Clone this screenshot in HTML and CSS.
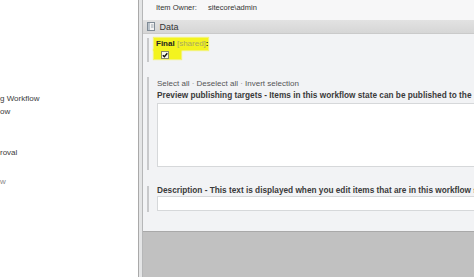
FILE: index.html
```html
<!DOCTYPE html>
<html>
<head>
<meta charset="utf-8">
<link rel="stylesheet" href="styles.css">
</head>
<body>
<div class="app">
  <div class="tree">
    <div class="node">g Workflow</div>
    <div class="node">ow</div>
    <div class="node gap1">roval</div>
    <div class="node gap2 dim">w</div>
  </div>
  <div class="splitter"></div>
  <div class="main">
    <div class="owner">
      <span class="owner-label">Item Owner:</span>
      <span class="owner-value">sitecore\admin</span>
    </div>
    <div class="section-head">
      <svg class="sec-icon" width="8" height="9" viewBox="0 0 8 9">
        <rect x="0.5" y="0.5" width="7" height="8" fill="#f4f4f4" stroke="#7f8b96"/>
        <rect x="1" y="1" width="2" height="7" fill="#b9c2ca"/>
        <line x1="4" y1="3" x2="6.5" y2="3" stroke="#9aa4ad"/>
        <line x1="4" y1="5" x2="6.5" y2="5" stroke="#9aa4ad"/>
      </svg>
      <span class="sec-title">Data</span>
    </div>
    <div class="fields">
      <div class="field field-final">
        <div class="hl hl-label"><b>Final</b> <span class="shared">[shared]</span><b>:</b></div>
        <div class="hl hl-check">
          <span class="checkbox">
            <svg width="6" height="6" viewBox="0 0 6 6"><path d="M0.8 3.2 L2.4 4.8 L5.3 1.2" fill="none" stroke="#111" stroke-width="1.4"/></svg>
          </span>
        </div>
      </div>
      <div class="field field-targets">
        <div class="links">Select all <span class="dot">·</span> Deselect all <span class="dot">·</span> Invert selection</div>
        <div class="ftitle">Preview publishing targets - Items in this workflow state can be published to the</div>
        <div class="box tall"></div>
      </div>
      <div class="field field-desc">
        <div class="ftitle desc-title">Description - This text is displayed when you edit items that are in this workflow s</div>
        <div class="box short"></div>
      </div>
    </div>
    <div class="bottom"></div>
  </div>
</div>
</body>
</html>
```
FILE: styles.css
```css
html, body {
  margin: 0;
  padding: 0;
}
body {
  width: 474px;
  height: 277px;
  overflow: hidden;
  font-family: "Liberation Sans", Arial, sans-serif;
  color: #3a3a3a;
  background: #ffffff;
}
.app {
  display: flex;
  height: 277px;
  width: 474px;
  overflow: hidden;
}
.tree {
  width: 138px;
  flex: none;
  background: #ffffff;
  padding-top: 91.5px;
  box-sizing: border-box;
  overflow: hidden;
  font-size: 8px;
  line-height: 13px;
}
.node {
  white-space: nowrap;
  color: #3c3c3c;
}
.node.gap1 { margin-top: 28px; }
.node.gap2 { margin-top: 16px; }
.node.dim { color: #8a8a8a; }

.splitter {
  width: 3px;
  flex: none;
  background: #e4e5e6;
  border-left: 1px solid #a9a9a9;
  border-right: 1px solid #b6b7b8;
}
.main {
  flex: 1;
  min-width: 0;
  display: flex;
  flex-direction: column;
  background: #f2f3f5;
  overflow: hidden;
}
.owner {
  height: 20px;
  box-sizing: border-box;
  padding: 3px 0 0 13px;
  font-size: 7.5px;
  line-height: 9px;
  background: #f7f7f8;
  white-space: nowrap;
  color: #333;
}
.owner-label {
  display: inline-block;
  width: 50px;
}
.section-head {
  height: 13px;
  display: flex;
  align-items: center;
  padding-left: 3.5px;
  background: linear-gradient(#e2e2e2, #d6d6d6);
  border-bottom: 1px solid #cacaca;
  flex: none;
}
.sec-icon {
  display: block;
  margin-right: 5px;
}
.sec-title {
  font-size: 9px;
  color: #333;
  line-height: 10px;
}
.fields {
  flex: 1;
  padding-top: 4px;
  padding-left: 4px;
}
.field {
  border-left: 2px solid #c8c9cb;
  box-sizing: border-box;
}
.field-final {
  padding: 0 0 3px 5px;
  display: flex;
  flex-direction: column;
  align-items: flex-start;
}
.hl {
  background: #f3f31f;
  box-shadow: 0 0 1px 1px rgba(243, 243, 31, 0.6);
}
.hl-label {
  font-size: 8px;
  line-height: 9.5px;
  padding: 1px 2px;
  width: 50px;
  white-space: nowrap;
  color: #222;
}
.shared {
  color: #a8a862;
}
.hl-check {
  padding: 1px 12px 1px 7px;
  height: 7px;
}
.checkbox {
  display: flex;
  align-items: center;
  justify-content: center;
  width: 6px;
  height: 6px;
  border: 1px solid #8a8a6a;
  background: #fbfbe8;
}
.checkbox svg { display: block; }

.field-targets {
  margin-top: 15px;
  padding: 2px 0 3px 8px;
}
.links {
  font-size: 8px;
  line-height: 9px;
  color: #555;
  white-space: nowrap;
}
.dot {
  color: #888;
}
.ftitle {
  font-size: 8.25px;
  font-weight: bold;
  line-height: 9px;
  color: #3a3a3a;
  white-space: nowrap;
  margin-top: 3px;
  height: 9px;
}
.box {
  background: #ffffff;
  border: 1px solid #d6d8da;
  box-sizing: border-box;
  width: 330px;
}
.box.tall {
  margin-top: 3px;
  height: 64px;
}
.field-desc {
  margin-top: 16px;
  padding: 0 0 1px 8px;
}
.desc-title {
  margin-top: 0;
}
.box.short {
  margin-top: 1px;
  height: 15px;
}
.bottom {
  flex: none;
  height: 45px;
  background: #c1c1c1;
  border-top: 1px solid #a9a9a9;
}
```
